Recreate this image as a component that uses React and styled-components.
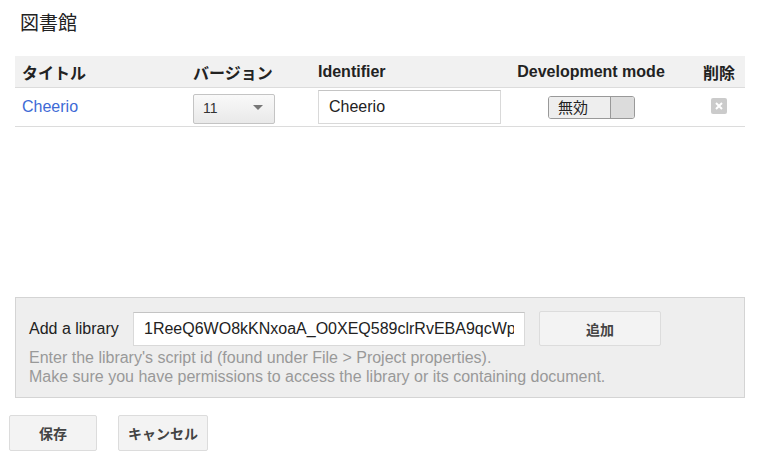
import React from "react";
import styled, { createGlobalStyle } from "styled-components";

const GlobalStyle = createGlobalStyle`
  body {
    margin: 0;
    background: #fff;
    font-family: "Liberation Sans", Arial, "Noto Sans CJK JP", sans-serif;
    color: #222;
  }
`;

const Page = styled.div`
  width: 768px;
  height: 459px;
  display: flex;
  flex-direction: column;
`;

const Title = styled.h1`
  margin: 0;
  padding: 12px 0 0 20px;
  height: 56px;
  box-sizing: border-box;
  font-size: 19px;
  font-weight: normal;
  line-height: 24px;
  color: #222;
`;

const TableArea = styled.div`
  margin: 0 23px 0 15px;
  height: 241px;
`;

const Row = styled.div`
  display: grid;
  grid-template-columns: 171px 125px 178px 204px 52px;
  align-items: center;
  height: ${(p) => p.h}px;
  background: ${(p) => (p.head ? "#f1f1f1" : "#fff")};
  border-bottom: 1px solid #dcdcdc;
  box-sizing: border-box;
`;

const HeadCell = styled.div`
  font-size: 16px;
  font-weight: bold;
  color: #222;
  padding-left: ${(p) => (p.center ? 0 : 7)}px;
  text-align: ${(p) => (p.center ? "center" : "left")};
  white-space: nowrap;
`;

const Cell = styled.div`
  padding-left: ${(p) => (p.center ? 0 : 7)}px;
  display: flex;
  justify-content: ${(p) => (p.center ? "center" : "flex-start")};
  align-items: center;
`;

const Link = styled.a`
  color: #3d6ad6;
  font-size: 16px;
  text-decoration: none;
`;

const Select = styled.div`
  width: 82px;
  height: 30px;
  box-sizing: border-box;
  border: 1px solid #c4c4c4;
  border-radius: 2px;
  background: linear-gradient(#f9f9f9, #e9e9e9);
  display: flex;
  align-items: center;
  justify-content: space-between;
  padding: 0 11px 3px 9px;
  font-size: 14px;
  color: #333;
  margin-top: 4px;
`;

const Arrow = styled.span`
  width: 0;
  height: 0;
  border-left: 5px solid transparent;
  border-right: 5px solid transparent;
  border-top: 5px solid #777;
`;

const TextBox = styled.input`
  width: ${(p) => p.w}px;
  height: 34px;
  box-sizing: border-box;
  border: 1px solid #d9d9d9;
  border-top-color: #c4c4c4;
  background: #fff;
  font-family: inherit;
  font-size: 16px;
  color: #222;
  padding: 0 10px;
  outline: none;
`;

const Toggle = styled.div`
  width: 87px;
  height: 23px;
  box-sizing: border-box;
  border: 1px solid #999;
  border-radius: 3px;
  display: flex;
  overflow: hidden;
  margin-left: 1px;
`;

const ToggleLabel = styled.span`
  flex: 1;
  background: #eeeeee;
  font-size: 15px;
  line-height: 21px;
  padding-left: 9px;
  color: #222;
`;

const Knob = styled.span`
  width: 23px;
  background: #dcdcdc;
  border-left: 1px solid #999;
`;

const DeleteIcon = styled.span`
  width: 16px;
  height: 16px;
  border-radius: 2px;
  background: #cbcbcb;
  display: flex;
  align-items: center;
  justify-content: center;
  margin-top: -3px;
`;

const Panel = styled.div`
  margin: 0 23px 0 15px;
  height: 101px;
  box-sizing: border-box;
  background: #eeeeee;
  border: 1px solid #d4d4d4;
  padding: 13px 13px 0 13px;
`;

const AddRow = styled.div`
  display: flex;
  align-items: center;
  gap: 14px;
`;

const AddLabel = styled.span`
  font-size: 16px;
  color: #222;
  width: 90px;
  white-space: nowrap;
`;

const Button = styled.button`
  width: ${(p) => p.w}px;
  height: ${(p) => p.h}px;
  box-sizing: border-box;
  border: 1px solid #dcdcdc;
  border-radius: 2px;
  background: #f3f3f3;
  font-family: inherit;
  font-size: 14px;
  font-weight: bold;
  color: #444;
  cursor: pointer;
`;

const Help = styled.div`
  margin-top: 2px;
  font-size: 16px;
  line-height: 19px;
  color: #999;
`;

const Footer = styled.div`
  display: flex;
  gap: 21px;
  padding: 17px 0 0 9px;
`;

export default function App() {
  return (
    <Page>
      <GlobalStyle />
      <Title>図書館</Title>
      <TableArea>
        <Row head h={32}>
          <HeadCell>タイトル</HeadCell>
          <HeadCell>バージョン</HeadCell>
          <HeadCell>Identifier</HeadCell>
          <HeadCell center>Development mode</HeadCell>
          <HeadCell center>削除</HeadCell>
        </Row>
        <Row h={39}>
          <Cell>
            <Link href="#">Cheerio</Link>
          </Cell>
          <Cell>
            <Select>
              <span>11</span>
              <Arrow />
            </Select>
          </Cell>
          <Cell>
            <TextBox w={183} defaultValue="Cheerio" />
          </Cell>
          <Cell center>
            <Toggle>
              <ToggleLabel>無効</ToggleLabel>
              <Knob />
            </Toggle>
          </Cell>
          <Cell center>
            <DeleteIcon>
              <svg width="8" height="8" viewBox="0 0 8 8">
                <path d="M1 1L7 7M7 1L1 7" stroke="#fff" strokeWidth="2" />
              </svg>
            </DeleteIcon>
          </Cell>
        </Row>
      </TableArea>
      <Panel>
        <AddRow>
          <AddLabel>Add a library</AddLabel>
          <TextBox w={392} defaultValue="1ReeQ6WO8kKNxoaA_O0XEQ589clrRvEBA9qcWp" />
          <Button w={122} h={35}>追加</Button>
        </AddRow>
        <Help>
          Enter the library's script id (found under File &gt; Project properties).
          <br />
          Make sure you have permissions to access the library or its containing document.
        </Help>
      </Panel>
      <Footer>
        <Button w={88} h={36}>保存</Button>
        <Button w={90} h={36}>キャンセル</Button>
      </Footer>
    </Page>
  );
}
